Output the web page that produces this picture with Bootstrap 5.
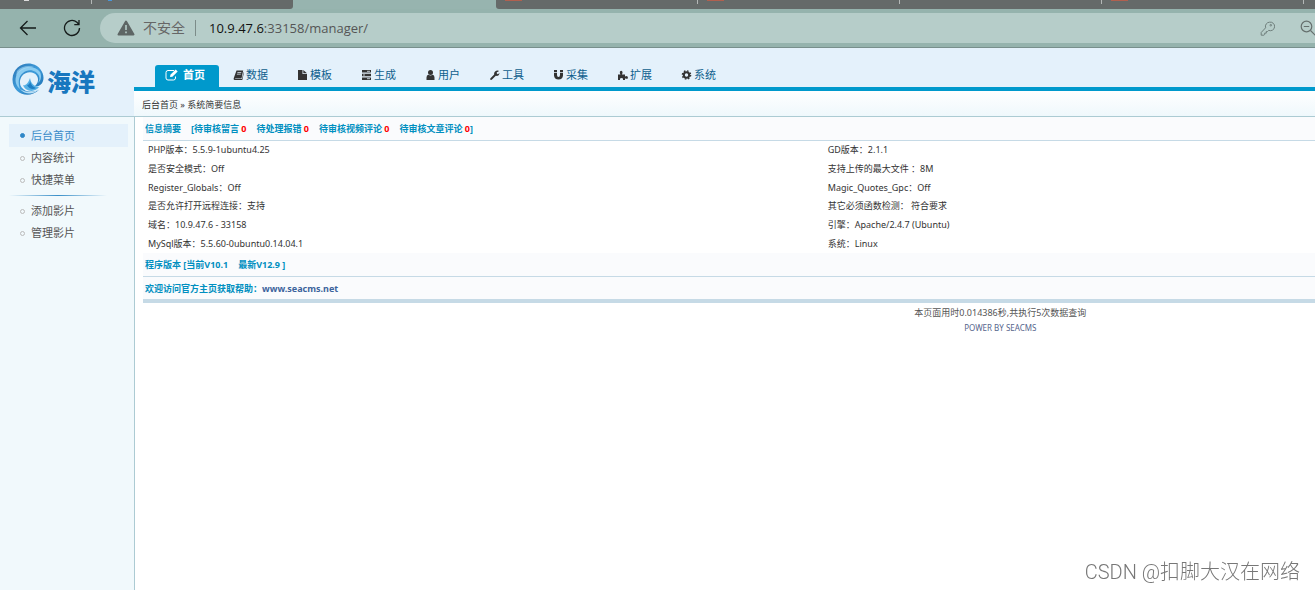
<!DOCTYPE html>
<html lang="zh-CN">
<head>
<meta charset="utf-8">
<meta name="viewport" content="width=device-width, initial-scale=1">
<title>海洋 - 后台首页</title>
<link href="https://cdn.jsdelivr.net/npm/bootstrap@5.3.0/dist/css/bootstrap.min.css" rel="stylesheet">
<style>
  body { font-family: "Noto Sans", "Noto Sans CJK SC", sans-serif; font-size: 9px; line-height: 18px; color: #333; background: #fff; }
  a { text-decoration: none; }
  svg { display: block; flex: none; }

  /* browser chrome */
  .tabstrip { height: 9px; background: #97b4af; overflow: hidden; }
  .tabs-dark { background: #656a69; }
  .tabs-before { width: 293px; border-radius: 0 0 3px 0; }
  .tabs-after { margin-left: 203px; border-radius: 0 0 0 3px; }
  .tab-cell { width: 202px; height: 4px; border-right: 1px solid #b4b8b7; padding-left: 9px; }
  .tab-cell i { display: block; width: 17px; height: 1px; background: #b0604f; }
  .tab-first { width: 92px; padding-left: 24px; }
  .tab-first i { width: 5px; background: #ddd; }
  .tab-second { border: 0; padding-left: 16px; }
  .tab-second i { width: 4px; background: #4a96d8; }
  .toolbar { height: 39px; background: #95b3ad; border-bottom: 1px solid #788f8c; }
  .toolbar button { border: 0; background: none; padding: 0; color: #151b1a; }
  .btn-back { margin-left: 19px; }
  .btn-reload { margin-left: 26px; margin-right: 19px; }
  .addr { height: 30px; background: #b6cdc9; border-radius: 15px 0 0 15px; padding-left: 17px; color: #666; font-size: 14px; line-height: 30px; }
  .addr .url { font-family: "Open Sans", sans-serif; font-size: 13px; color: #555; }
  .addr .host { color: #111; }
  .addr .bar { width: 1px; height: 16px; background: #7c8c89; margin: 0 13px 0 10px; }
  .addr .btn-key { color: #6f7f7c; margin-right: 25px; }
  .addr .btn-zoom { color: #66706e; width: 15px; overflow: hidden; }

  /* admin header */
  .top { background: #e4f1fb; border-bottom: 1px solid #accbd3; height: 69px; }
  .brand { width: 134px; padding: 0 0 6px 12px; color: #1877bf; }
  .brand b { font: 900 24px/32px "Noto Sans CJK SC", sans-serif; margin-left: 3px; padding-top: 4px; }
  .main-nav { padding: 17px 0 0 21px; border-bottom: 4px solid #0099cc; font-size: 11px; line-height: 20px; height: 43px; }
  .main-nav a { width: 64px; height: 22px; flex: 0 1 64px; color: #0f5f8d; padding: 0 0 2px 14px; gap: 2px; white-space: nowrap; }
  .main-nav svg { color: #333; }
  .main-nav a.current { background: #0099cc; color: #fff; font-weight: bold; border-radius: 3px 3px 0 0; padding-left: 10px; gap: 4px; }
  .main-nav a.current svg { color: #fff; }
  .crumbs { height: 25px; line-height: 27px; padding-left: 8px; background: linear-gradient(#fff, #eff8fc); }
  .crumbs a { color: #333; }

  /* sidebar */
  .side { width: 135px; flex: none; background: #f1f9fc; border-right: 1px solid #accbd3; padding: 7px 6px 0 9px; font-size: 11px; }
  .side a { display: flex; align-items: center; height: 22px; padding-left: 11px; gap: 6px; color: #555; }
  .side a::before { content: ""; width: 5px; height: 5px; border: 1px solid #bbb; border-radius: 50%; }
  .side a.current { height: 23px; background: #e4f1fb; color: #3a8cc9; }
  .side a.current::before { background: #2f87c8; border-color: #2f87c8; }
  .side hr { margin: 4px 21px 4px 0; border: 0; height: 1px; opacity: 1; background: linear-gradient(90deg, transparent, #3a8fc8, transparent); }

  /* content */
  .content { padding-left: 8px; min-width: 0; }
  .sec { display: flex; background: #fafbfd; border-bottom: 1px solid #c6dae6; height: 24px; line-height: 23px; padding-left: 2px; font-size: 9px; font-weight: bold; color: #008fc0; margin: 0; white-space: nowrap; }
  .sec span { margin-right: 10px; }
  .sec em { font-style: normal; color: #f00; }
  .sec a { color: #3c639c; }
  .sec-last { border-bottom: 4px solid #c6dae6; height: 26px; }
  .info { width: 100%; height: 112px; table-layout: fixed; }
  .info td { padding: 0 0 0 5px; line-height: 18px; vertical-align: middle; }
  .info td:first-child { width: 58%; }
  .foot { margin-left: 46.3%; padding-top: 2px; line-height: 15px; color: #555; }
  .foot a { color: #56658c; font-size: 8px; }
  .sign { position: fixed; right: 15px; bottom: 3px; font: 300 20px/30px Roboto, "Noto Sans CJK SC", sans-serif; color: #777; }
</style>
</head>
<body class="d-flex flex-column min-vh-100">

<div class="tabstrip d-flex">
  <div class="tabs-dark tabs-before d-flex">
    <div class="tab-cell tab-first"><i></i></div>
    <div class="tab-cell tab-second"><i></i></div>
  </div>
  <div class="tabs-dark tabs-after d-flex flex-fill">
    <div class="tab-cell"><i></i></div><div class="tab-cell"><i></i></div>
    <div class="tab-cell"></div><div class="tab-cell"><i></i></div>
  </div>
</div>
<div class="toolbar d-flex align-items-center">
  <button type="button" class="btn-back" aria-label="返回"><svg width="18" height="16" viewBox="0 0 18 16" fill="none" stroke="currentColor" stroke-width="1.3"><path d="M17 8H2M8.500 1 1.500 8l7 7"/></svg></button>
  <button type="button" class="btn-reload" aria-label="刷新"><svg width="18" height="18" viewBox="0 0 18 18" fill="none" stroke="currentColor" stroke-width="1.3"><path d="M16.500 9a7.500 7.500 0 1 1-2.600-5.700L16 5.500M16 1v4.700h-4.700"/></svg></button>
  <div class="addr d-flex align-items-center flex-fill">
    <svg width="18" height="16" viewBox="0 0 18 16"><path d="M9 1.500 16.500 14.500h-15z" fill="#5e6665" stroke="#5e6665" stroke-width="2" stroke-linejoin="round"/><path d="M9 5v5M9 11.500v1.700" stroke="#b6cdc9" stroke-width="1.600"/></svg>
    <span class="ms-2">不安全</span>
    <span class="bar"></span>
    <span class="url flex-fill"><span class="host">10.9.47.6</span>:33158/manager/</span>
    <button type="button" class="btn-key" aria-label="密码"><svg width="15" height="15" viewBox="0 0 15 15" fill="none" stroke="currentColor"><path d="M9.500 1.200a4.300 4.300 0 1 1-.8 8.200L7.500 10.500H6.300v1.600H4.700v1.400l-.8.700H1.200v-2.700l4.400-4.700A4.300 4.300 0 0 1 9.500 1.200z"/><circle cx="10.800" cy="4.200" r=".8"/></svg></button>
    <button type="button" class="btn-zoom" aria-label="缩放"><svg width="18" height="16" viewBox="0 0 18 16" fill="none" stroke="currentColor" stroke-width="1.200"><circle cx="6.500" cy="6.500" r="5.300"/><path d="M3.800 6.500h5.400M10.500 10.500l5 5"/></svg></button>
  </div>
</div>

<header class="top d-flex">
  <a href="#" class="brand d-flex align-items-center">
    <svg width="32" height="32" viewBox="0 0 32 32">
      <defs><linearGradient id="sea" x1="0" y1="0" x2="1" y2="1"><stop offset="0" stop-color="#2a74b4"/><stop offset=".5" stop-color="#3f9ddb"/><stop offset="1" stop-color="#1765a8"/></linearGradient></defs>
      <path d="M27 27C16 37 0 30 .5 16 1 5 11-1 20 1c9 2 13 11 11 17-1 4-5 6-8 5 3-3 4-7 2-10-3-5-11-5-15 0-4 6-2 12 4 15 4 1 9 1 13-1z" fill="url(#sea)"/>
      <path d="M28 9C22 1 9 3 5 11c-3 6-1 12 3 15-2-6-2-12 3-16 5-5 14-3 16 3 1 3 0 5-1 7 3-2 4-7 2-11z" fill="#8accf1"/>
      <path d="M5 8C9 3 17 2 22 4 14 4 8 7 4 13z" fill="#a9daf5" opacity=".6"/>
      <path d="M11 22c2 1 5-1 7-7 1 5 3 8 9 9-3 5-13 6-16-2z" fill="#55b0e5"/>
      <path d="M15 22c2 0 3-2 3-4 1 4 3 6 6 7-3 2-7 1-9-3z" fill="#1f7fc5"/>
      <path d="M8 26c6 4 13 4 19 0-5 6-14 6-19 0z" fill="#b5dff6"/>
    </svg>
    <b>海洋</b>
  </a>
  <div class="flex-fill">
    <nav class="main-nav d-flex">
      <a href="#" class="current d-flex align-items-center"><svg width="14" height="12" viewBox="0 0 14 12" fill="none" stroke="currentColor"><path d="M9 1.500H3A2 2 0 0 0 1 3.500v5.500a2 2 0 0 0 2 2h5.500a2 2 0 0 0 2-2V7.500"/><path d="m5 8 .4-2.300L10.700.6l2 2-5.300 5.100z" fill="currentColor" stroke="none"/></svg>首页</a>
      <a href="#" class="d-flex align-items-center"><svg width="11" height="10" viewBox="0 0 11 10"><path fill="currentColor" fill-rule="evenodd" d="M3.500.5h6.700L8.500 8.500H2.200v.6h6.700L10.700 2l.3.500L9.300 10H1.500Q0 9.500.8 8zM4.500 2l-.2.700h3.900l.2-.7zM4 3.800l-.2.700h3.900l.2-.7z"/></svg>数据</a>
      <a href="#" class="d-flex align-items-center"><svg width="11" height="10" viewBox="0 0 11 10"><path fill="currentColor" d="M1 0h4.500v4H10v6H1zM6.300 0 10 3.300H6.300z"/></svg>模板</a>
      <a href="#" class="d-flex align-items-center"><svg width="11" height="10" viewBox="0 0 11 10"><path fill="currentColor" d="M1 0h9v2.600H1zM1 3.700h9v2.600H1zM1 7.400h9V10H1z"/><path stroke="#e4f1fb" stroke-width=".8" d="M6 1.300h3M2 5h2M6 8.700h3"/></svg>生成</a>
      <a href="#" class="d-flex align-items-center"><svg width="11" height="10" viewBox="0 0 11 10"><circle cx="5.500" cy="2.500" r="2.500" fill="currentColor"/><path fill="currentColor" d="M1.500 10V7.500Q1.500 5 3.500 4.800q2 1.400 4 0 2 .2 2 2.700V10z"/></svg>用户</a>
      <a href="#" class="d-flex align-items-center"><svg width="11" height="10" viewBox="0 0 11 10"><path fill="currentColor" d="M9.600 1.500 7.800 2.200v1.400l1.100.6 1.500-1.100c.1 2-1.700 3.300-3.600 2.700L3 9.600C1.900 10.500.6 9.100 1.500 8.200l3.700-3.700C4.600 2 7 0 9.600.7z"/></svg>工具</a>
      <a href="#" class="d-flex align-items-center"><svg width="11" height="10" viewBox="0 0 11 10"><path fill="currentColor" d="M1 0h3v2.200H1zM7 0h3v2.200H7zM1 3h3v2q0 2 1.500 2T7 5V3h3v2.500Q9.600 9.500 5.500 9.500T1 5.500z"/></svg>采集</a>
      <a href="#" class="d-flex align-items-center"><svg width="11" height="10" viewBox="0 0 11 10"><path fill="currentColor" d="M1 4.500h2.500Q2.500 3 3 1.500q1.200-1.500 2.300 0 .6 1.500-.5 3H8v2q1.500-.8 2.500 0 .8 1.300 0 2.200-1 .5-2.500-.5V10H6V8.500q-1.500-1-3 0V10H1z"/></svg>扩展</a>
      <a href="#" class="d-flex align-items-center"><svg width="11" height="10" viewBox="0 0 11 10" fill="none" stroke="currentColor"><circle cx="5.500" cy="5" r="2.700" stroke-width="2"/><circle cx="5.500" cy="5" r="4.100" stroke-width="1.400" stroke-dasharray="1.600 1.620"/></svg>系统</a>
    </nav>
    <div class="crumbs"><a href="#">后台首页</a> » 系统简要信息</div>
  </div>
</header>

<div class="d-flex flex-fill">
  <nav class="side">
    <a href="#" class="current">后台首页</a>
    <a href="#">内容统计</a>
    <a href="#">快捷菜单</a>
    <hr>
    <a href="#">添加影片</a>
    <a href="#">管理影片</a>
  </nav>
  <main class="content flex-fill">
    <h2 class="sec"><span>信息摘要</span><span>[待审核留言 <em>0</em></span><span>待处理报错 <em>0</em></span><span>待审核视频评论 <em>0</em></span><span>待审核文章评论 <em>0</em>]</span></h2>
    <table class="info">
      <tr><td>PHP版本：5.5.9-1ubuntu4.25</td><td>GD版本：2.1.1</td></tr>
      <tr><td>是否安全模式：Off</td><td>支持上传的最大文件 ：8M</td></tr>
      <tr><td>Register_Globals：Off</td><td>Magic_Quotes_Gpc：Off</td></tr>
      <tr><td>是否允许打开远程连接：支持</td><td>其它必须函数检测： 符合要求</td></tr>
      <tr><td>域名：10.9.47.6 - 33158</td><td>引擎：Apache/2.4.7 (Ubuntu)</td></tr>
      <tr><td>MySql版本：5.5.60-0ubuntu0.14.04.1</td><td>系统：Linux</td></tr>
    </table>
    <h2 class="sec"><span>程序版本 [当前V10.1</span><span>最新V12.9 ]</span></h2>
    <p class="sec sec-last">欢迎访问官方主页获取帮助：<a href="#">www.seacms.net</a></p>
    <footer class="foot text-center">本页面用时0.014386秒,共执行5次数据查询<br><a href="#">POWER BY SEACMS</a></footer>
  </main>
</div>
<div class="sign">CSDN @扣脚大汉在网络</div>

<script src="https://cdn.jsdelivr.net/npm/bootstrap@5.3.0/dist/js/bootstrap.bundle.min.js"></script>
</body>
</html>
